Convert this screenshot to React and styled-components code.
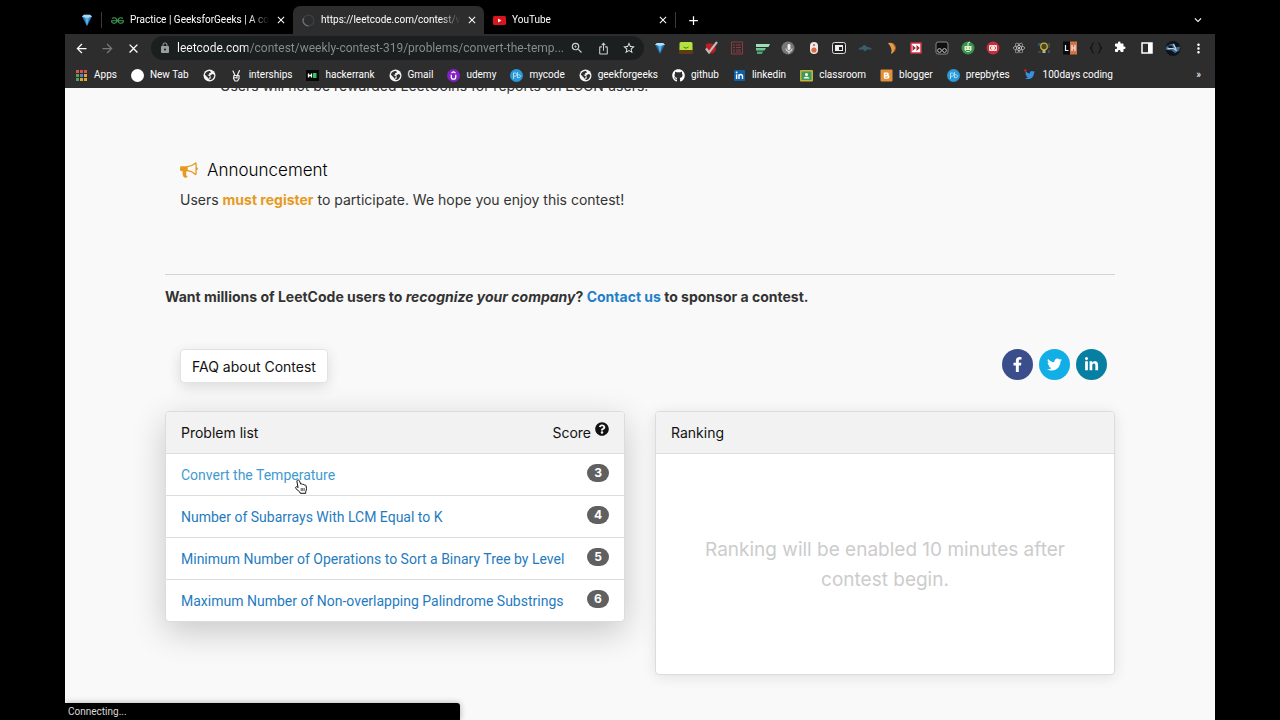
import React from 'react';
import styled, { createGlobalStyle, css } from 'styled-components';
import {
  MdAdd, MdArrowBack, MdArrowForward, MdClose, MdExtension, MdIosShare,
  MdKeyboardArrowDown, MdLock, MdMic, MdMoreVert, MdStarBorder, MdZoomIn,
} from 'react-icons/md';
import {
  FaFacebookF, FaGithub, FaLinkedinIn, FaQuestionCircle, FaReact, FaTwitter, FaYoutube,
} from 'react-icons/fa';
import { SiGeeksforgeeks } from 'react-icons/si';

const GlobalStyle = createGlobalStyle`
  * {
    box-sizing: border-box;
  }
  body {
    margin: 0;
    background: #000;
    font-family: Inter, "Liberation Sans", sans-serif;
  }
  button, input {
    font-family: inherit;
  }
`;

const Screen = styled.div`
  height: 100vh;
  padding: 0 65px;
  background: #000;
`;

const BrowserWindow = styled.div`
  position: relative;
  display: flex;
  flex-direction: column;
  height: 100%;
  overflow: hidden;
`;

/* ---- tab strip ---- */

const TabStrip = styled.header`
  display: flex;
  flex: none;
  align-items: flex-end;
  height: 34px;
  padding-left: 8px;
  font-family: Roboto, sans-serif;
`;

const PinnedTab = styled.button`
  display: flex;
  align-items: center;
  justify-content: center;
  width: 28px;
  height: 28px;
  padding: 0;
  border: none;
  background: none;
`;

const Tab = styled.div`
  display: flex;
  flex: 0 1 191px;
  align-items: center;
  gap: 6px;
  min-width: 0;
  height: 28px;
  padding: 0 6px 0 9px;
  border-radius: 7px 7px 0 0;
  color: #fff;
  ${({ $active }) => $active && css`
    background: #2d2d2e;
  `}
`;

const TabTitle = styled.button`
  flex: 1;
  min-width: 0;
  padding: 0;
  overflow: hidden;
  border: none;
  background: none;
  color: #fff;
  font-size: 10px;
  line-height: 14px;
  text-align: left;
  white-space: nowrap;
  mask-image: linear-gradient(to right, #000 calc(100% - 20px), transparent);
`;

const StripLine = styled.span`
  width: 1px;
  height: 16px;
  margin-bottom: 6px;
  background: #3a3a3a;
`;

const IconButton = styled.button`
  display: flex;
  flex: none;
  align-items: center;
  justify-content: center;
  width: ${({ $width }) => $width || 12}px;
  height: ${({ $height }) => $height || 14}px;
  padding: 0;
  border: none;
  background: none;
  color: ${({ $color }) => $color || '#fff'};
  font-size: ${({ $size }) => $size || 12}px;
`;

const Spacer = styled.span`
  flex: 1;
`;

/* ---- address row ---- */

const Toolbar = styled.nav`
  display: flex;
  flex: none;
  align-items: center;
  height: 28px;
  padding: 0 4px 0 3px;
  background: #2d2d2e;
`;

const Omnibox = styled.div`
  display: flex;
  flex: 6;
  align-items: center;
  min-width: 0;
  height: 24px;
  margin: 0 3px 0 5px;
  padding: 0 2px 0 8px;
  border-radius: 12px;
  background: #1c1f1f;
  color: #9a9c9d;
`;

const Address = styled.input`
  flex: 1;
  min-width: 0;
  margin-left: 6px;
  padding: 0;
  border: none;
  outline: none;
  background: linear-gradient(to right, #fff 71px, #8b8e8f 71px);
  background-clip: text;
  color: transparent;
  font-family: Roboto, sans-serif;
  font-size: 12px;
  line-height: 16px;
`;

const Extensions = styled.div`
  display: flex;
  flex: 7;
  align-items: center;
  justify-content: space-around;
  min-width: 0;
`;

/* ---- bookmarks ---- */

const Bookmarks = styled.nav`
  display: flex;
  flex: none;
  align-items: center;
  gap: 14px;
  height: 26px;
  padding: 0 14px 0 10px;
  background: #2d2d2e;
  font-family: Roboto, sans-serif;
`;

const Bookmark = styled.a`
  display: flex;
  align-items: center;
  gap: 6px;
  color: #fff;
  font-size: 10px;
  line-height: 14px;
  text-decoration: none;
  white-space: nowrap;
`;

/* ---- contest page ---- */

const Page = styled.main`
  flex: 1;
  min-height: 0;
  padding: 0 100px;
  overflow: hidden;
  background: #f9f9f9;
  color: #333;
  font-size: 14px;
  line-height: 22px;
`;

const Rules = styled.ul`
  margin: -13px 0 0;
  padding: 0 0 0 55px;
  list-style: none;
`;

const Announcement = styled.section`
  padding: 61px 15px 63px;
  p {
    margin: 7px 0 0;
  }
  strong {
    color: #e69a22;
  }
`;

const AnnouncementTitle = styled.h2`
  display: flex;
  align-items: center;
  gap: 9px;
  margin: 0;
  color: #000;
  font-size: 17px;
  font-weight: 300;
  line-height: 24px;
`;

const Sponsor = styled.p`
  margin: 0;
  padding-top: 11px;
  border-top: 1px solid #d4d4d4;
  font-weight: 700;
  a {
    color: #1f7fc9;
    text-decoration: none;
  }
`;

const Actions = styled.div`
  display: flex;
  align-items: flex-start;
  justify-content: space-between;
  margin-top: 41px;
  padding: 0 8px 0 15px;
`;

const FaqButton = styled.button`
  height: 34px;
  padding: 0 11px;
  border: 1px solid #e2e2e2;
  border-radius: 4px;
  background: #fff;
  box-shadow: 0 4px 14px rgba(0, 0, 0, 0.12);
  color: #111;
  font-size: 14px;
`;

const Share = styled.div`
  display: flex;
  gap: 6px;
`;

const ShareLink = styled.a`
  display: flex;
  align-items: center;
  justify-content: center;
  width: 31px;
  height: 31px;
  border-radius: 50%;
  background: ${({ $color }) => $color};
  color: #fff;
  font-size: 15px;
`;

const Panels = styled.div`
  display: grid;
  grid-template-columns: repeat(2, minmax(0, 1fr));
  align-items: start;
  gap: 30px;
  margin-top: 28px;
`;

const Panel = styled.section`
  border: 1px solid #dcdcdc;
  border-radius: 4px;
  background: #fff;
  box-shadow: ${({ $raised }) => ($raised
    ? '0 10px 34px rgba(0, 0, 0, 0.2)'
    : '0 2px 14px rgba(0, 0, 0, 0.1)')};
`;

const PanelHeader = styled.h3`
  display: flex;
  justify-content: space-between;
  height: 42px;
  margin: 0;
  padding: 10px 15px;
  border-bottom: 1px solid #dcdcdc;
  border-radius: 3px 3px 0 0;
  background: #f2f2f2;
  color: #111;
  font-size: 14px;
  font-weight: 400;
  line-height: 22px;
`;

const ScoreLabel = styled.span`
  display: flex;
  gap: 4px;
`;

const ProblemList = styled.ul`
  margin: 0;
  padding: 0;
  list-style: none;
`;

const ProblemRow = styled.li`
  display: flex;
  justify-content: space-between;
  height: 42px;
  padding: 10px 15px;
  border-bottom: 1px solid #dcdcdc;
  white-space: nowrap;
  &:last-child {
    height: 41px;
    border-bottom: none;
  }
`;

const ProblemLink = styled.a`
  position: relative;
  color: ${({ $hover }) => ($hover ? '#3f9bd0' : '#1f7bc0')};
  font-family: Roboto, sans-serif;
  text-decoration: none;
`;

const Score = styled.span`
  width: 22px;
  height: 18px;
  border-radius: 9px;
  background: #606060;
  color: #fff;
  font-size: 12px;
  font-weight: 700;
  line-height: 18px;
  text-align: center;
`;

const Pointer = styled.svg`
  position: absolute;
  top: 15px;
  left: 113px;
`;

const RankingNotice = styled.p`
  margin: 0;
  padding: 81px 40px 79px;
  color: #ccc;
  font-size: 19px;
  line-height: 30px;
  text-align: center;
`;

const StatusBubble = styled.div`
  position: absolute;
  bottom: 0;
  left: 0;
  width: 395px;
  height: 17px;
  padding-left: 3px;
  border-radius: 0 3px 0 0;
  background: #000;
  box-shadow: 0 0 6px rgba(0, 0, 0, 0.3);
  color: #d8d8d8;
  font-family: Roboto, sans-serif;
  font-size: 10px;
  line-height: 17px;
`;

/* ---- drawings ---- */

const Gem = () => (
  <svg width="12" height="12" viewBox="0 0 12 12">
    <path d="M1 2.5 3 .8h6l2 1.7L6 12z" fill="#2476b8" />
    <path d="M1 2.5 3 .8h6l2 1.7-5 2z" fill="#a9d8f2" />
    <path d="M4 3.8 6 12l2-8.2z" fill="#5fb0e3" />
  </svg>
);

const Spinner = () => (
  <svg width="13" height="13" viewBox="0 0 13 13" fill="none">
    <circle cx="6.5" cy="6.5" r="5.4" stroke="#3d4146" strokeWidth="1.3" />
    <path d="M6.5 11.9A5.4 5.4 0 0 1 1.6 4.2" stroke="#66727f" strokeWidth="1.3" />
  </svg>
);

const YouTubeLogo = () => (
  <svg width="13" height="13" viewBox="0 0 13 13">
    <rect y="2" width="13" height="9" rx="1.5" fill="#d8141c" />
    <path d="m5 4.5 3.5 2L5 8.5z" fill="#fff" />
  </svg>
);

const Globe = () => (
  <svg width="13" height="13" viewBox="0 0 13 13">
    <circle cx="6.5" cy="6.5" r="6" fill="#f4f4f4" />
    <path d="M1.8 5.6C2.6 3.2 4.6 1.8 7 2l1 1.4-2 .8.4 1.4-2 .5 2.4 1.1-.8 2.9M7.3 6.3l2.5-1.2 1.5.9c0 2.2-1.4 4.2-3.4 5l-2-.3 1.9-1.5z" fill="#2d2d2e" />
  </svg>
);

const AppsGrid = () => {
  const colors = ['#d9534a', '#d9534a', '#d9534a', '#55a05c', '#4f84c9', '#d7a83c', '#55a05c', '#d7a83c', '#d7a83c'];
  return (
    <svg width="13" height="13" viewBox="0 0 13 13">
      {colors.map((color, i) => (
        <rect key={ i } x={ 1 + (i % 3) * 4 } y={ 1 + Math.floor(i / 3) * 4 } width="3" height="3" fill={ color } />
      ))}
    </svg>
  );
};

const WhiteDot = () => (
  <svg width="13" height="13" viewBox="0 0 13 13"><circle cx="6.5" cy="6.5" r="6.5" fill="#fff" /></svg>
);

const PeaceHand = () => (
  <svg width="13" height="13" viewBox="0 0 13 13" fill="none" stroke="#eee" strokeWidth="1.2" strokeLinecap="round">
    <path d="M3 2 5 6.5M9.5 1.5 7.2 6.5M4 6.5h5v3L7.5 12H5L3.5 9.5zM4 8.5l3 .5M7 7v2" />
  </svg>
);

const HackerRank = () => (
  <svg width="13" height="13" viewBox="0 0 13 13">
    <rect y="1" width="13" height="11" fill="#050807" />
    <path d="M2.5 4.5v4M5.5 4.5v4M2.5 6.5h3" stroke="#fff" strokeWidth="1.3" />
    <rect x="7" y="4" width="3.5" height="5" fill="#32c766" />
  </svg>
);

const Udemy = () => (
  <svg width="13" height="13" viewBox="0 0 13 13" fill="none">
    <circle cx="6.5" cy="6.5" r="6.5" fill="#8421c4" />
    <path d="M4.3 5.8v2.2a2.2 2.2 0 0 0 4.4 0V5.8M4.5 4 6.5 2.8 8.5 4" stroke="#fff" strokeWidth="1.3" />
  </svg>
);

const PrepBytes = () => (
  <svg width="13" height="13" viewBox="0 0 13 13" fill="none">
    <circle cx="6.5" cy="6.5" r="6.5" fill="#2b98d8" />
    <path d="M3.5 10V4h1.7a1.6 1.6 0 0 1 0 3.2H3.5M7.5 3v6M7.5 6.6a1.5 1.5 0 1 1 0 1.2" stroke="#a9dcf7" />
  </svg>
);

const LinkedinTile = () => (
  <svg width="13" height="13" viewBox="0 0 13 13">
    <rect x="1" y="1" width="11" height="11" rx="1" fill="#0d5fa8" />
    <path d="M3.6 5.2V10M6 10V5.2M6 7.5c0-2.6 3.5-2.6 3.5 0V10" fill="none" stroke="#fff" strokeWidth="1.4" />
    <circle cx="3.6" cy="3.4" r=".9" fill="#fff" />
  </svg>
);

const Classroom = () => (
  <svg width="13" height="13" viewBox="0 0 13 13">
    <rect y="1" width="13" height="11.5" rx="1" fill="#c9b23c" />
    <rect x="1.5" y="2.5" width="10" height="8.5" fill="#3c9a58" />
    <circle cx="6.5" cy="5.5" r="1.5" fill="#fff" />
    <path d="M3.5 9.5c.5-2.5 5.5-2.5 6 0z" fill="#fff" />
  </svg>
);

const Blogger = () => (
  <svg width="13" height="13" viewBox="0 0 13 13">
    <rect x=".5" y=".5" width="12" height="12" rx="1" fill="#e0913a" />
    <path d="M3.8 3.5h3.4a1.5 1.5 0 0 1 1.2 2.5l1 .7v1.3a1.7 1.7 0 0 1-1.7 1.7H5.3a1.5 1.5 0 0 1-1.5-1.5z" fill="#fff" />
    <path d="M5.2 5.3h1.7M5.2 8h2.6" stroke="#e0913a" strokeWidth=".9" />
  </svg>
);

const Bird = () => (
  <svg width="13" height="13" viewBox="0 0 13 13">
    <FaTwitter x="1" y="1" width="12" height="12" color="#3592dc" />
    <circle cx="1.3" cy="1.5" r="1.3" fill="#c3262d" />
  </svg>
);

const Bullhorn = () => (
  <svg width="18" height="18" viewBox="0 0 1792 1792">
    <path fill="#e69a22" d="M1664 640q53 0 90.5 37.5t37.5 90.5-37.5 90.5-90.5 37.5v384q0 52-38 90t-90 38q-417-347-812-380-58 19-91 66t-31 100.5 40 92.5q-20 33-23 65.5t6 58 33.5 55 48 50 61.5 50.5q-29 58-111.5 83t-168.5 11.5-132-55.5q-7-23-29.5-87.5t-32-94.5-23-89-15-101 3.5-98.5 22-110.5h-122q-66 0-113-47t-47-113v-192q0-66 47-113t113-47h480q435 0 896-384 52 0 90 38t38 90v384zm-128 604v-954q-394 302-768 343v270q377 42 768 341z" />
  </svg>
);

const HandPointer = () => (
  <Pointer width="14" height="16" viewBox="0 0 14 16">
    <path
      d="M3.5 1.2c1-.5 1.7 0 2 .9l1.2 3 .7-.2c.7-.2 1.2.1 1.4.6.8-.3 1.4 0 1.6.5.9-.2 1.5.1 1.7.9l.4 2.7c.1 1.3-.4 2-.8 3.1v1.6H6.3L5.8 13 2 9.7c-.7-.7-.6-1.4-.1-1.8.6-.4 1.2-.2 2.2.8L3 3C2.7 2 2.9 1.5 3.5 1.2z"
      fill="#fff"
      stroke="#111"
    />
    <path d="M7.2 9v3M8.7 9v3M10.2 9v3" stroke="#111" strokeWidth=".7" />
  </Pointer>
);

const extensionArt = [
  ['Gem', <g>
    <path d="M3 4.5 5 3h6l2 1.5L8 14z" fill="#1f6ba6" />
    <path d="M3 4.5 5 3h6l2 1.5-5 2z" fill="#b5e0f5" />
    <path d="M6 5.8 8 13l2-7.2z" fill="#58aee0" />
  </g>],
  ['Smile box', <g>
    <rect x="1" y="7" width="14" height="7" rx="1" fill="#5e3a17" />
    <path d="M1.5 10V3.5q0-1.5 1.5-1.5h10q1.5 0 1.5 1.5V10z" fill="#b5e23c" />
    <path d="M5.5 7q2.5 2.5 5 0" fill="none" stroke="#4d7a17" />
  </g>],
  ['Checker', <g>
    <path d="M3 4q5-2 9 1l1 5q-3 5-7 3Q2 10 3 4z" fill="#b91f27" />
    <path d="m3 8.5 3 4L14 2" fill="none" stroke="#c4b8b5" strokeWidth="2.2" />
  </g>],
  ['Notes', <g fill="none" stroke="#8d3a43">
    <rect x="2.5" y="2" width="11" height="12" />
    <path d="M4 5h2M7 5h5M4 7.5h2M7 7.5h5M4 10h2M7 10h5M4 12h2M7 12h5" />
  </g>],
  ['Bars', <g>
    <path d="M1 4h14l-1.5 3H1z" fill="#9de0b7" />
    <path d="M1 8h10l-1.5 2.5H1z" fill="#72c795" />
    <path d="M2 11.5h6L7 14H2z" fill="#4ba773" />
  </g>],
  ['Voice', <g>
    <circle cx="8" cy="8" r="6.5" fill="#777" />
    <MdMic x="3" y="3" width="10" height="10" color="#eee" />
  </g>],
  ['Capsule', <g>
    <rect x="4" y="2" width="8" height="12" rx="4" fill="#f0e8e4" />
    <circle cx="8" cy="10" r="2.6" fill="#d96a46" />
    <circle cx="8" cy="5" r="1" fill="#cf4f4f" />
  </g>],
  ['Picture in picture', <g>
    <rect x="1.5" y="2.5" width="13" height="11" rx="2" fill="#222" stroke="#ddd" />
    <rect x="4" y="5" width="8" height="6" fill="#eee" />
    <rect x="8" y="7" width="3" height="3" fill="#222" />
  </g>],
  ['Cloud', <path d="M1 9.5Q2 7 5 7q2-4 5 0 4 0 5 2.5H10L8 11.5 6 9.5z" fill="#38606c" />],
  ['Leaf', <g>
    <path d="M5 3q7-1 7 5 0 4-4 6 2-5-3-11z" fill="#e49b43" />
    <path d="M9 3q6 3 2 9" fill="none" stroke="#a75b26" />
    <path d="M3 12h4" stroke="#1c3346" strokeWidth="2" />
  </g>],
  ['Fast forward', <g>
    <rect x="3" y="3" width="10" height="10" fill="#fff" stroke="#d3303d" strokeWidth="1.5" />
    <path d="m4.5 5 3.3 3-3.3 3zM8.5 5l3.3 3-3.3 3z" fill="#a52632" />
  </g>],
  ['Reader', <g fill="none" stroke="#c4c4c4">
    <rect x="2" y="2" width="12" height="12" rx="2" fill="#101010" stroke="#888" />
    <circle cx="5.5" cy="10.5" r="1.9" />
    <circle cx="10.5" cy="10.5" r="1.9" />
  </g>],
  ['Robot', <g>
    <circle cx="8" cy="8" r="6.5" fill="#3c9348" />
    <path d="M4.5 6h7v4q-3.5 4-7 0z" fill="#e3f2df" />
    <path d="M8 6V3l2-1" fill="none" stroke="#e3f2df" />
    <path d="M6 8h1M9 8h1M6 10.5h4" stroke="#3c9348" />
  </g>],
  ['Code', <g>
    <circle cx="8" cy="8" r="6.5" fill="#c72d3f" />
    <rect x="4" y="5" width="8" height="6" rx="1" fill="#f3dede" />
    <path d="M6.5 6.5 5 8l1.5 1.5M9.5 6.5 11 8 9.5 9.5" fill="none" stroke="#c72d3f" strokeWidth=".8" />
  </g>],
  ['React', <FaReact x="2" y="2" width="12" height="12" color="#d7dadb" />],
  ['Bulb', <g>
    <path d="M2 3h3v3H2zM12 10h2v3h-2z" fill="#315269" />
    <circle cx="8" cy="6.5" r="3.3" fill="#4b4326" stroke="#c9ae3d" strokeWidth="1.3" />
    <path d="M6.5 10h3v3h-3z" fill="#b8b38f" />
    <path d="M2 12h3M13 3v5" stroke="#467043" />
  </g>],
  ['Highlighter', <g>
    <rect x="1" y="1.5" width="7" height="13" fill="#0b0b0b" />
    <rect x="8" y="1.5" width="7" height="13" fill="#cf7544" />
    <path d="M3.5 5v5.5h3M10 5v6M13 5v6M10 8h3" fill="none" stroke="#eee" strokeWidth="1.2" />
  </g>],
  ['Brackets', <path d="M5.5 3C3 4 5 7 2.5 8 5 9 3 12 5.5 13M10.5 3C13 4 11 7 13.5 8 11 9 13 12 10.5 13" fill="none" stroke="#111" strokeWidth="1.2" />],
  ['Extensions', <MdExtension x="1" y="1" width="14" height="14" color="#fff" />],
  ['Side panel', <g>
    <rect x="3" y="3" width="10" height="10" fill="none" stroke="#fff" strokeWidth="1.5" />
    <rect x="9" y="3" width="4" height="10" fill="#fff" />
  </g>],
];

const Avatar = () => (
  <svg width="19" height="19" viewBox="0 0 19 19">
    <circle cx="9.5" cy="9.5" r="9" fill="#0c131b" />
    <path d="M1 8q5-5 8-4l4 4 5-1-1 5-5 3-4-3-7-1z" fill="#41688c" />
    <path d="m3 10 6-1 5 3M10 4l3 6" stroke="#bfd0de" strokeWidth="1.5" fill="none" />
    <path d="M3 6h5l2 3H5z" fill="#101923" />
  </svg>
);

const bookmarks = [
  ['Apps', <AppsGrid />],
  ['New Tab', <WhiteDot />],
  ['', <Globe />],
  ['interships', <PeaceHand />],
  ['hackerrank', <HackerRank />],
  ['Gmail', <Globe />],
  ['udemy', <Udemy />],
  ['mycode', <PrepBytes />],
  ['geekforgeeks', <Globe />],
  ['github', <FaGithub size="13" />],
  ['linkedin', <LinkedinTile />],
  ['classroom', <Classroom />],
  ['blogger', <Blogger />],
  ['prepbytes', <PrepBytes />],
  ['100days coding', <Bird />],
];

const problems = [
  { title: 'Convert the Temperature', score: 3, hover: true },
  { title: 'Number of Subarrays With LCM Equal to K', score: 4 },
  { title: 'Minimum Number of Operations to Sort a Binary Tree by Level', score: 5 },
  { title: 'Maximum Number of Non-overlapping Palindrome Substrings', score: 6 },
];

const BrowserTab = ({ icon, title, active }) => (
  <Tab $active={ active }>
    {icon}
    <TabTitle type="button">{title}</TabTitle>
    <IconButton type="button" aria-label="Close tab"><MdClose /></IconButton>
  </Tab>
);

export default function App() {
  return (
    <Screen>
      <GlobalStyle />
      <BrowserWindow>
        <TabStrip>
          <PinnedTab type="button" aria-label="Pinned tab"><Gem /></PinnedTab>
          <StripLine />
          <BrowserTab icon={ <SiGeeksforgeeks size="13" color="#3c9a50" /> } title="Practice | GeeksforGeeks | A co" />
          <BrowserTab icon={ <Spinner /> } title="https://leetcode.com/contest/w" active />
          <BrowserTab icon={ <YouTubeLogo /> } title="YouTube" />
          <StripLine />
          <IconButton type="button" aria-label="New tab" $width={ 34 } $height={ 28 } $size={ 15 }><MdAdd /></IconButton>
          <Spacer />
          <IconButton type="button" aria-label="Search tabs" $width={ 34 } $height={ 28 } $size={ 14 }><MdKeyboardArrowDown /></IconButton>
        </TabStrip>

        <Toolbar>
          <IconButton type="button" aria-label="Back" $width={ 26 } $height={ 28 } $size={ 15 }><MdArrowBack /></IconButton>
          <IconButton type="button" aria-label="Forward" $width={ 26 } $height={ 28 } $size={ 15 } $color="#77797a"><MdArrowForward /></IconButton>
          <IconButton type="button" aria-label="Stop" $width={ 26 } $height={ 28 } $size={ 15 }><MdClose /></IconButton>
          <Omnibox>
            <MdLock size="12" />
            <Address
              aria-label="Address"
              defaultValue="leetcode.com/contest/weekly-contest-319/problems/convert-the-temp..."
            />
            <IconButton type="button" aria-label="Zoom" $width={ 26 } $size={ 14 } $color="#cfcfcf"><MdZoomIn /></IconButton>
            <IconButton type="button" aria-label="Share" $width={ 26 } $size={ 13 } $color="#cfcfcf"><MdIosShare /></IconButton>
            <IconButton type="button" aria-label="Bookmark" $width={ 26 } $size={ 14 } $color="#e4e4e4"><MdStarBorder /></IconButton>
          </Omnibox>
          <Extensions>
            {extensionArt.map(([name, art]) => (
              <IconButton key={ name } type="button" aria-label={ name } $width={ 16 } $height={ 16 }>
                <svg width="16" height="16" viewBox="0 0 16 16">{art}</svg>
              </IconButton>
            ))}
            <IconButton type="button" aria-label="Profile" $width={ 16 } $height={ 19 }><Avatar /></IconButton>
            <IconButton type="button" aria-label="Menu" $width={ 16 } $height={ 16 } $size={ 15 }><MdMoreVert /></IconButton>
          </Extensions>
        </Toolbar>

        <Bookmarks>
          {bookmarks.map(([label, icon], i) => (
            <Bookmark key={ i } href="#" aria-label={ label || 'Site' }>
              {icon}
              {label && <span>{label}</span>}
            </Bookmark>
          ))}
          <Spacer />
          <Bookmark href="#">»</Bookmark>
        </Bookmarks>

        <Page>
          <Rules>
            <li>Users will not be rewarded LeetCoins for reports on LCCN users.</li>
          </Rules>
          <Announcement>
            <AnnouncementTitle>
              <Bullhorn />
              Announcement
            </AnnouncementTitle>
            <p>
              Users <strong>must register</strong> to participate. We hope you enjoy this contest!
            </p>
          </Announcement>
          <Sponsor>
            Want millions of LeetCode users to <em>recognize your company</em>?{' '}
            <a href="#">Contact us</a> to sponsor a contest.
          </Sponsor>
          <Actions>
            <FaqButton type="button">FAQ about Contest</FaqButton>
            <Share>
              <ShareLink href="#" aria-label="Facebook" $color="#3b4e8c"><FaFacebookF /></ShareLink>
              <ShareLink href="#" aria-label="Twitter" $color="#12aee6"><FaTwitter /></ShareLink>
              <ShareLink href="#" aria-label="LinkedIn" $color="#077fa3"><FaLinkedinIn /></ShareLink>
            </Share>
          </Actions>
          <Panels>
            <Panel $raised>
              <PanelHeader>
                Problem list
                <ScoreLabel>
                  Score
                  <FaQuestionCircle size="14" />
                </ScoreLabel>
              </PanelHeader>
              <ProblemList>
                {problems.map(({ title, score, hover }) => (
                  <ProblemRow key={ title }>
                    <ProblemLink href="#" $hover={ hover }>
                      {title}
                      {hover && <HandPointer />}
                    </ProblemLink>
                    <Score>{score}</Score>
                  </ProblemRow>
                ))}
              </ProblemList>
            </Panel>
            <Panel>
              <PanelHeader>Ranking</PanelHeader>
              <RankingNotice>Ranking will be enabled 10 minutes after contest begin.</RankingNotice>
            </Panel>
          </Panels>
        </Page>
        <StatusBubble role="status">Connecting...</StatusBubble>
      </BrowserWindow>
    </Screen>
  );
}
